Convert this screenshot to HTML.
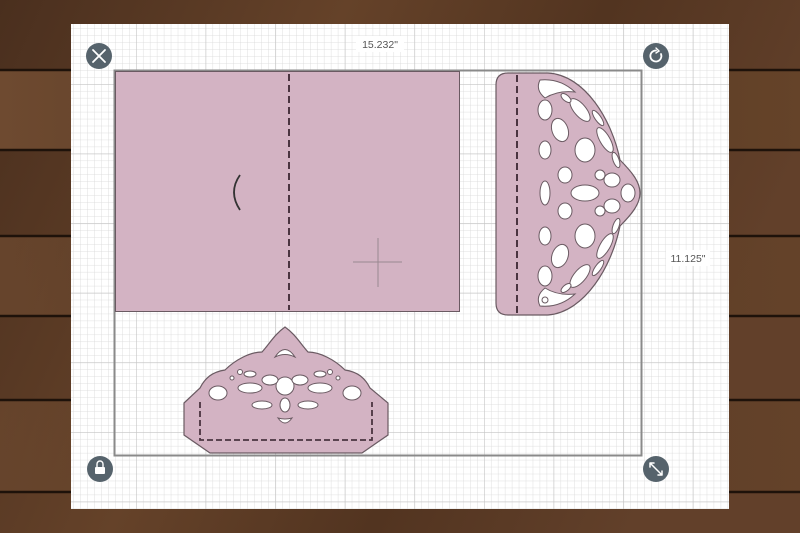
<!DOCTYPE html>
<html><head><meta charset="utf-8"><style>
html,body{margin:0;padding:0;width:800px;height:533px;overflow:hidden;background:#5a3a24}
svg{display:block}
text{font-family:"Liberation Sans",sans-serif}
</style></head><body>
<svg width="800" height="533" viewBox="0 0 800 533" xmlns="http://www.w3.org/2000/svg">
<defs>
<linearGradient id="w1" x1="0" y1="0" x2="1" y2="0.3">
<stop offset="0" stop-color="#4a2f1e"/><stop offset="0.4" stop-color="#654229"/><stop offset="0.7" stop-color="#523420"/><stop offset="1" stop-color="#62402a"/></linearGradient>
<linearGradient id="w2" x1="0" y1="0" x2="1" y2="0">
<stop offset="0" stop-color="#6e4a30"/><stop offset="0.5" stop-color="#553722"/><stop offset="1" stop-color="#654329"/></linearGradient>
<pattern id="minor" x="66.4" y="14.4" width="6.96" height="6.96" patternUnits="userSpaceOnUse">
<path d="M0 0H6.96M0 0V6.96" stroke="#d8d8d8" stroke-width="0.8" fill="none"/></pattern>
<pattern id="major" x="66.4" y="14.4" width="69.6" height="69.6" patternUnits="userSpaceOnUse">
<path d="M0 0H69.6M0 0V69.6" stroke="#c4c4c4" stroke-width="1.2" fill="none"/></pattern>
</defs>
<rect width="800" height="533" fill="url(#w1)"/>
<rect y="70" width="800" height="80" fill="url(#w2)"/>
<rect y="236" width="800" height="80" fill="url(#w2)" opacity="0.7"/>
<rect y="400" width="800" height="92" fill="url(#w2)" opacity="0.6"/>
<g stroke="#1e120a" stroke-width="2.5">
<line x1="0" y1="70" x2="800" y2="70"/><line x1="0" y1="150" x2="800" y2="150"/>
<line x1="0" y1="236" x2="800" y2="236"/><line x1="0" y1="316" x2="800" y2="316"/>
<line x1="0" y1="400" x2="800" y2="400"/><line x1="0" y1="492" x2="800" y2="492"/></g>
<rect x="71" y="24" width="658" height="485" fill="#fff"/>
<rect x="71" y="24" width="658" height="485" fill="url(#minor)"/>
<rect x="71" y="24" width="658" height="485" fill="url(#major)"/>
<rect x="114.5" y="70.5" width="527" height="385" fill="none" stroke="#8a8a8a" stroke-width="2"/>
<rect x="356" y="36" width="48" height="16" fill="#fff"/>
<text x="380" y="48" font-size="10.5" fill="#555" text-anchor="middle">15.232"</text>
<rect x="666" y="250" width="44" height="16" fill="#fff"/>
<text x="688" y="262" font-size="10.5" fill="#555" text-anchor="middle">11.125"</text>
<rect x="115.5" y="71.5" width="344" height="240" fill="#d3b3c3" stroke="#6a5a62" stroke-width="1"/>
<line x1="289" y1="74" x2="289" y2="310" stroke="#4a3440" stroke-width="2" stroke-dasharray="7,4"/>
<path d="M240 175 Q228 192 240 210" fill="none" stroke="#333" stroke-width="1.8"/>
<path d="M353 262H402M378 238V287" stroke="#9a8890" stroke-width="1"/>
<path d="M508 73H548C585 75 612 120 620 160C632 172 640 182 640 193C640 204 632 214 620 226C612 266 585 312 548 315H508Q496 315 496 303V85Q496 73 508 73Z" fill="#d3b3c3" stroke="#6a5a62" stroke-width="1.2"/>
<line x1="517" y1="75" x2="517" y2="313" stroke="#4a3440" stroke-width="2" stroke-dasharray="7,4"/>
<g fill="#fff" stroke="#6a5a62" stroke-width="1">
<path d="M540 80Q560 78 575 92Q558 90 545 98Q535 90 540 80Z"/>
<path d="M540 306Q560 308 575 294Q558 296 545 288Q535 296 540 306Z"/>
<ellipse cx="545" cy="110" rx="7" ry="10"/><ellipse cx="545" cy="276" rx="7" ry="10"/>
<ellipse cx="560" cy="130" rx="8" ry="12" transform="rotate(-20 560 130)"/>
<ellipse cx="560" cy="256" rx="8" ry="12" transform="rotate(20 560 256)"/>
<ellipse cx="580" cy="110" rx="6" ry="14" transform="rotate(-40 580 110)"/>
<ellipse cx="580" cy="276" rx="6" ry="14" transform="rotate(40 580 276)"/>
<ellipse cx="545" cy="150" rx="6" ry="9"/><ellipse cx="545" cy="236" rx="6" ry="9"/>
<ellipse cx="585" cy="150" rx="10" ry="12"/><ellipse cx="585" cy="236" rx="10" ry="12"/>
<ellipse cx="605" cy="140" rx="5" ry="14" transform="rotate(-30 605 140)"/>
<ellipse cx="605" cy="246" rx="5" ry="14" transform="rotate(30 605 246)"/>
<ellipse cx="565" cy="175" rx="7" ry="8"/><ellipse cx="565" cy="211" rx="7" ry="8"/>
<ellipse cx="545" cy="193" rx="5" ry="12"/>
<ellipse cx="585" cy="193" rx="14" ry="8"/>
<ellipse cx="612" cy="180" rx="8" ry="7"/><ellipse cx="612" cy="206" rx="8" ry="7"/>
<ellipse cx="628" cy="193" rx="7" ry="9"/>
<ellipse cx="600" cy="175" rx="5" ry="5"/><ellipse cx="600" cy="211" rx="5" ry="5"/>
<ellipse cx="545" cy="300" rx="3" ry="3"/>
<ellipse cx="598" cy="118" rx="3" ry="9" transform="rotate(-35 598 118)"/>
<ellipse cx="598" cy="268" rx="3" ry="9" transform="rotate(35 598 268)"/>
<ellipse cx="566" cy="98" rx="3" ry="6" transform="rotate(-50 566 98)"/>
<ellipse cx="566" cy="288" rx="3" ry="6" transform="rotate(50 566 288)"/>
<ellipse cx="616" cy="160" rx="3" ry="8" transform="rotate(-20 616 160)"/>
<ellipse cx="616" cy="226" rx="3" ry="8" transform="rotate(20 616 226)"/>
</g>
<path d="M184 403L200 388C205 378 212 372 225 370C235 360 250 352 262 352C270 343 275 334 285 327C295 334 300 343 308 352C320 352 335 360 345 370C358 372 365 378 370 388L388 403V435L362 453H210L184 435Z" fill="#d3b3c3" stroke="#6a5a62" stroke-width="1.2"/>
<path d="M200 402V440H372V402" fill="none" stroke="#4a3440" stroke-width="1.8" stroke-dasharray="6,3"/>
<g fill="#fff" stroke="#6a5a62" stroke-width="1">
<path d="M275 357Q285 342 295 357Q285 352 275 357Z"/>
<ellipse cx="285" cy="386" rx="9" ry="9"/>
<ellipse cx="270" cy="380" rx="8" ry="5"/><ellipse cx="300" cy="380" rx="8" ry="5"/>
<ellipse cx="285" cy="405" rx="5" ry="7"/>
<ellipse cx="250" cy="388" rx="12" ry="5"/><ellipse cx="320" cy="388" rx="12" ry="5"/>
<ellipse cx="250" cy="374" rx="6" ry="3"/><ellipse cx="320" cy="374" rx="6" ry="3"/>
<ellipse cx="262" cy="405" rx="10" ry="4"/><ellipse cx="308" cy="405" rx="10" ry="4"/>
<ellipse cx="218" cy="393" rx="9" ry="7"/><ellipse cx="352" cy="393" rx="9" ry="7"/>
<circle cx="240" cy="372" r="2.5"/><circle cx="330" cy="372" r="2.5"/>
<circle cx="232" cy="378" r="2"/><circle cx="338" cy="378" r="2"/>
<path d="M278 418Q285 428 292 418Q285 420 278 418Z"/>
</g>
<g fill="#56636c">
<circle cx="99" cy="56" r="13"/><circle cx="656" cy="56" r="13"/>
<circle cx="100" cy="469" r="13"/><circle cx="656" cy="469" r="13"/></g>
<g stroke="#fff" stroke-width="1.8" fill="none" stroke-linecap="round">
<path d="M93 50L105 62M105 50L93 62"/>
<path d="M661 54A5.5 5.5 0 1 1 656 50.5"/><path d="M656 48L659 51L656 53" stroke-width="1.4"/>
<rect x="95" y="467" width="10" height="7" rx="1" fill="#fff" stroke="none"/>
<path d="M97 467V464A3 3 0 0 1 103 464V467" stroke-width="1.4"/>
<path d="M650 463L662 475M650 463V467M650 463H654M662 475V471M662 475H658" stroke-width="1.5"/>
</g>
</svg>
</body></html>
